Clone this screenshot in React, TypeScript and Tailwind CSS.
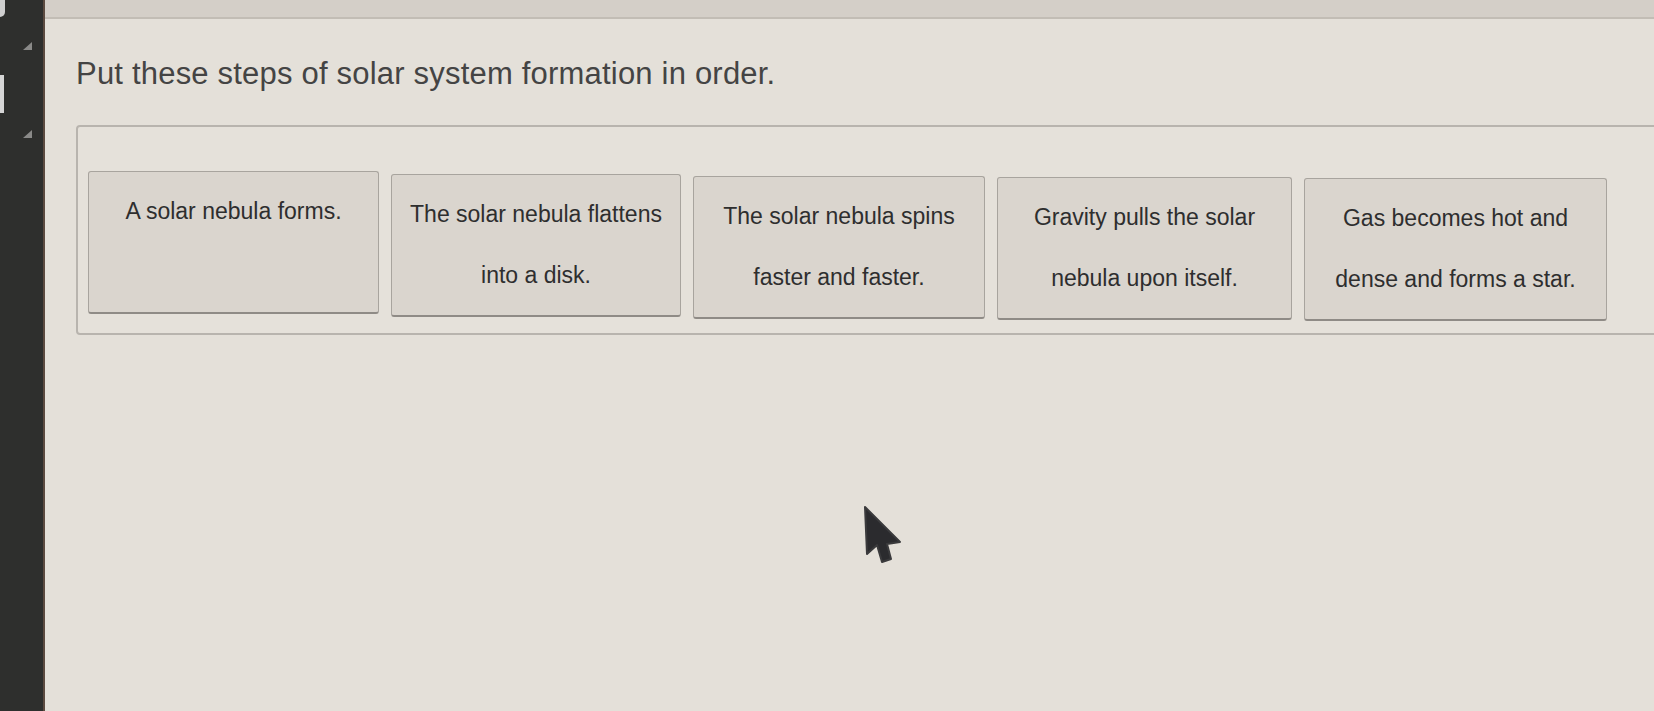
import React from "react";

const steps = [
  { lines: ["A solar nebula forms."], cls: "w-[291px] mt-0" },
  { lines: ["The solar nebula flattens", "into a disk."], cls: "w-[290px] mt-[3px]" },
  { lines: ["The solar nebula spins", "faster and faster."], cls: "w-[292px] mt-[5px]" },
  { lines: ["Gravity pulls the solar", "nebula upon itself."], cls: "w-[295px] mt-[6px]" },
  { lines: ["Gas becomes hot and", "dense and forms a star."], cls: "w-[303px] mt-[7px]" },
];

function Cursor() {
  return (
    <svg
      className="absolute left-[862px] top-[505px]"
      width="44"
      height="62"
      viewBox="0 0 44 62"
    >
      <path
        d="M3 2 L5 49 L15 40 L20 57 L29 54 L25 39 L38 37 Z"
        fill="#2b2b2e"
        stroke="#3a3a3c"
        strokeWidth="2"
        strokeLinejoin="round"
      />
    </svg>
  );
}

export default function App() {
  return (
    <div className="relative flex h-[711px] w-[1654px] overflow-hidden bg-[#e4e0d9] font-['Liberation_Sans',Arial,sans-serif]">
      {/* dark edge of the monitor */}
      <aside className="relative w-[45px] shrink-0 border-r-2 border-[#5b4a40] bg-[#2e2f2d]">
        <div className="h-[17px] w-[5px] rounded-br-full bg-[#cfcfcf]" />
        <div className="ml-[23px] mt-[25px] h-[8px] w-[9px] bg-[#8a8a88] [clip-path:polygon(100%_0,100%_100%,0_100%)]" />
        <div className="mt-[25px] h-[38px] w-[4px] bg-[#d6d6d6]" />
        <div className="ml-[23px] mt-[17px] h-[8px] w-[9px] bg-[#8a8a88] [clip-path:polygon(100%_0,100%_100%,0_100%)]" />
      </aside>

      <main className="flex min-w-0 flex-1 flex-col">
        <div className="h-[19px] shrink-0 border-b-2 border-[#c2bdb5] bg-[#d4cfc8]" />

        <h1 className="ml-[31px] mt-[37px] text-[31px] leading-[36px] tracking-[0.2px] text-[#444444]">
          Put these steps of solar system formation in order.
        </h1>

        <section className="ml-[31px] mt-[33px] w-[1610px] shrink-0 rounded-[4px] border-2 border-[#b8b4ae] bg-[#e5e1da] pb-[12px] pl-[10px] pt-[44px]">
          <div className="flex items-start gap-[12px]">
            {steps.map((s, i) => (
              <div
                key={i}
                className={`${s.cls} h-[143px] shrink-0 rounded-[3px] border border-b-2 border-[#a8a49e] border-b-[#8f8b86] bg-[#dad5ce] pt-[9px] text-center text-[23px] leading-[61px] text-[#2e2e2e]`}
              >
                {s.lines.map((l) => (
                  <div key={l}>{l}</div>
                ))}
              </div>
            ))}
          </div>
        </section>
      </main>

      <Cursor />
    </div>
  );
}
